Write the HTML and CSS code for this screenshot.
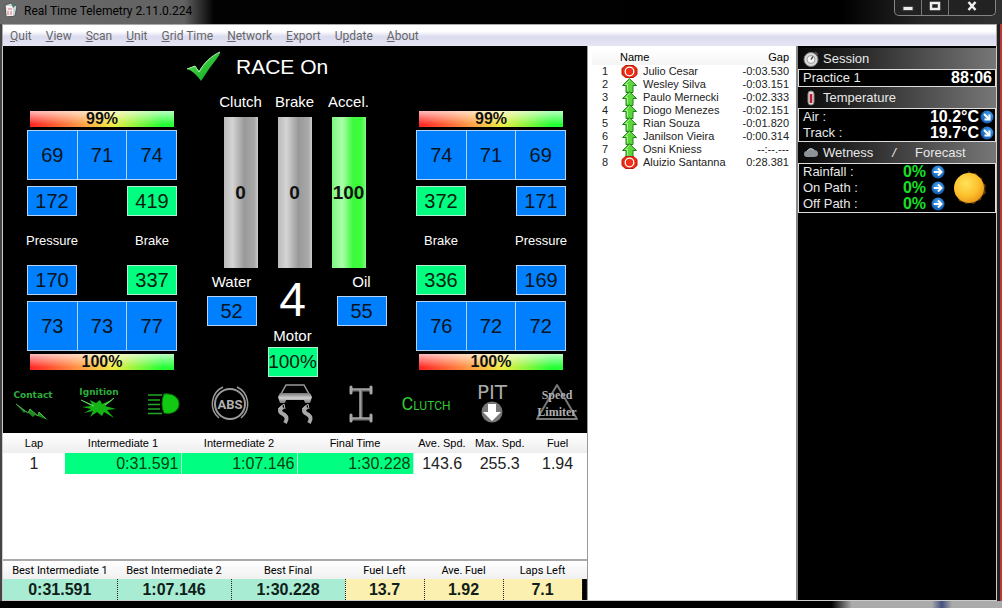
FILE: index.html
```html
<!DOCTYPE html>
<html lang="en">
<head>
<meta charset="utf-8">
<title>Real Time Telemetry 2.11.0.224</title>
<link rel="stylesheet" href="styles.css">
</head>
<body>
<svg class="defs" width="0" height="0" aria-hidden="true">
  <defs>
    <linearGradient id="steel" x1="0" y1="0" x2="0" y2="1"><stop offset="0" stop-color="#777"/><stop offset=".5" stop-color="#d0d0d0"/><stop offset="1" stop-color="#777"/></linearGradient>
    <linearGradient id="chk" x1="0" y1="0" x2="1" y2="1"><stop offset="0" stop-color="#5be860"/><stop offset="1" stop-color="#05a010"/></linearGradient>
    <radialGradient id="sun" cx=".4" cy=".35" r=".7"><stop offset="0" stop-color="#ffe25a"/><stop offset=".6" stop-color="#fcc02c"/><stop offset="1" stop-color="#e89418"/></radialGradient>
    <radialGradient id="ball" cx=".5" cy=".35" r=".7"><stop offset="0" stop-color="#4aa8f0"/><stop offset="1" stop-color="#0a4fa8"/></radialGradient>
    <symbol id="up" viewBox="0 0 16 15"><path d="M8 .7 15 7.500h-3.500V14.500h-7V7.500H1z" fill="#5cd63c" stroke="#20801a"/><path d="M8 2.500 4 6.500h2v6" fill="none" stroke="#a4f488"/></symbol>
    <symbol id="stop" viewBox="0 0 16 13"><path d="M4 .5h8l3.500 3v6l-3.500 3H4L.5 9.500v-6z" fill="#e82c14" stroke="#b81808"/><circle cx="8" cy="6.500" r="4.300" fill="#f23018" stroke="#fff" stroke-width="1.300"/></symbol>
    <symbol id="arrow" viewBox="0 0 14 14"><circle cx="7" cy="7" r="6.500" fill="url(#ball)"/><path d="M2.800 7h7M7 3.500 10.500 7 7 10.500" fill="none" stroke="#fff" stroke-width="2"/></symbol>
  </defs>
</svg>

<header class="titlebar">
  <svg class="appicon" viewBox="0 0 14 16"><path d="M1 3 7 1l6 3-2 10-9 1z" fill="#c8d8d4" stroke="#555"/><path d="M2 4h7v10H3z" fill="#f4f0f0"/><path d="M4 7h4M4 9v4M7 9v4" stroke="#d07080"/><path d="m7 1 5 2-3 3z" fill="#50786c"/></svg>
  <h1 class="title">Real Time Telemetry 2.11.0.224</h1>
  <div class="winbtns">
    <button aria-label="Minimize"><svg width="12" height="12"><path d="M1 6.500h10v4H1z" fill="#eee" stroke="#444"/></svg></button>
    <button aria-label="Maximize"><svg width="12" height="12"><path d="M2 3h8v6H2z" fill="none" stroke="#eee" stroke-width="2.500"/></svg></button>
    <button class="close" aria-label="Close"><svg width="12" height="12"><path d="m2.500 2 7 8m0-8-7 8" stroke="#eee" stroke-width="2.500"/></svg></button>
  </div>
</header>

<div class="frame">
<nav class="menu">
  <button><u>Q</u>uit</button><button><u>V</u>iew</button><button><u>S</u>can</button><button><u>U</u>nit</button><button><u>G</u>rid Time</button><button><u>N</u>etwork</button><button><u>E</u>xport</button><button>U<u>p</u>date</button><button><u>A</u>bout</button>
</nav>
<main class="panes">
<section class="left">
  <div class="dash">
    <div class="race">
      <svg width="36" height="32" viewBox="0 0 36 32"><path d="M1 18 9 15 13 20C18 12 25 5 34 1 34 5 27 12 23 18L15 30Q8 20 1 18z" fill="url(#chk)"/><path d="M1 18 9 15 13 21C18 12 25 5 34 1" fill="none" stroke="#b8f4b8"/></svg>
      <span>RACE On</span>
    </div>
    <div class="car">
      <div class="wheels">
        <div class="wear">99%</div>
        <div class="tyre"><span>69</span><span>71</span><span>74</span></div>
        <div class="pair"><span class="box">172</span><span class="box ok">419</span></div>
        <div class="names"><span>Pressure</span><span>Brake</span></div>
        <div class="pair"><span class="box">170</span><span class="box ok">337</span></div>
        <div class="tyre"><span>73</span><span>73</span><span>77</span></div>
        <div class="wear">100%</div>
      </div>
      <div class="engine">
        <div class="pedals">
          <div class="pedal"><span>Clutch</span><b class="bar">0</b></div>
          <div class="pedal"><span>Brake</span><b class="bar">0</b></div>
          <div class="pedal"><span>Accel.</span><b class="bar full">100</b></div>
        </div>
        <div class="fluids">
          <div class="gauge"><span>Water</span><span class="box">52</span></div>
          <div class="motor"><span class="gear">4</span><span class="mlabel">Motor</span><span class="box ok">100%</span></div>
          <div class="gauge"><span>Oil</span><span class="box">55</span></div>
        </div>
      </div>
      <div class="wheels">
        <div class="wear">99%</div>
        <div class="tyre"><span>74</span><span>71</span><span>69</span></div>
        <div class="pair"><span class="box ok">372</span><span class="box">171</span></div>
        <div class="names"><span>Brake</span><span>Pressure</span></div>
        <div class="pair"><span class="box ok">336</span><span class="box">169</span></div>
        <div class="tyre"><span>76</span><span>72</span><span>72</span></div>
        <div class="wear">100%</div>
      </div>
    </div>
    <div class="lamps">
      <svg viewBox="0 0 44 44"><text class="lamp-dv" x="22" y="16">Contact</text><path d="m5 22 12 9 2-4 8 7 1-4 9 8-13-5-2 2-7-6-2 2z" fill="#1c8a1c"/><path d="m5 22 12 9 2-4 8 7 1-4 7 7" fill="none" stroke="#4cb84c"/></svg>
      <svg viewBox="0 0 44 44"><text class="lamp-dv" x="22" y="13">Ignition</text><path d="m4 18 11 5-2-5 6 3 4-3 2 4 12-5-9 7 11 3-9 1 7 8-10-6-2 4-5-4-7 5 3-6-9 2 7-4-9-2 9-1z" fill="#14b414"/><path d="m4 18 13 6m20-8-9 7" stroke="#7ad87a"/></svg>
      <svg viewBox="0 0 44 44"><path d="M6 13h14M6 18h12M6 22.500h12M6 27h12M6 31.500h14" stroke="#22a822" stroke-width="1.500"/><path d="M22 12c9-1 15 4 15 10s-6 11-15 9q-4-9 0-19z" fill="#12c812" stroke="#067806"/></svg>
      <svg viewBox="0 0 44 44"><circle cx="22" cy="22" r="15" fill="none" stroke="#9a9a9a" stroke-width="2"/><path d="M15 5a18.500 18.500 0 0 0-4 31M29 5a18.500 18.500 0 0 1 4 31" fill="none" stroke="#9a9a9a" stroke-width="1.500"/><text class="lamp-abs" x="22" y="27">ABS</text></svg>
      <svg viewBox="0 0 44 44"><path d="M13 3h18l5 9H8z" fill="#050505" stroke="#999" stroke-width="1.500"/><path d="M7 11h30l2 4-2 6h-5l-1-3H13l-1 3H7l-2-6z" fill="url(#steel)"/><path d="M10 25q-6 4 0 7t2 9M34 25q-6 4 0 7t2 9" fill="none" stroke="#a8a8a8" stroke-width="4"/><path d="m5 27 6-5 1 5m17 0 6-5 1 5" stroke="#bbb" fill="none"/></svg>
      <svg viewBox="0 0 44 44"><path d="M12 8h20M22 8v28M12 37h20" stroke="#777" stroke-width="3"/><path d="M12 7h20M21 8v28M12 36h20" stroke="#c4c4c4"/><path d="M12 5v6M32 5v6M12 33v6M32 33v6" stroke="#a8a8a8" stroke-width="3" stroke-linecap="round"/></svg>
      <svg viewBox="0 0 44 44"><text class="lamp-clutch" x="22" y="28"><tspan class="big">C</tspan>LUTCH</text></svg>
      <svg viewBox="0 0 44 44"><text class="lamp-pit" x="22" y="17">PIT</text><circle cx="22" cy="30" r="10.500" fill="#777"/><path d="M18 22h8v8h5l-9 9-9-9h5z" fill="#fff"/></svg>
      <svg viewBox="0 0 44 44"><path d="m22 3 20 34H2z" fill="none" stroke="#777" stroke-width="2" stroke-linejoin="round"/><text class="lamp-lim" x="22" y="17">Speed</text><text class="lamp-lim" x="22" y="34">Limiter</text></svg>
    </div>
  </div>

  <div class="laps">
    <table>
      <colgroup><col class="c-lap"><col class="c-time"><col class="c-time"><col class="c-time"><col class="c-spd"><col class="c-spd"><col class="c-spd"></colgroup>
      <thead><tr><th>Lap</th><th>Intermediate 1</th><th>Intermediate 2</th><th>Final Time</th><th>Ave. Spd.</th><th>Max. Spd.</th><th>Fuel</th></tr></thead>
      <tbody><tr><td>1</td><td class="good">0:31.591</td><td class="good">1:07.146</td><td class="good">1:30.228</td><td>143.6</td><td>255.3</td><td>1.94</td></tr></tbody>
    </table>
  </div>
  <div class="best">
    <table>
      <colgroup><col class="b-time"><col class="b-time"><col class="b-time"><col class="b-fuel"><col class="b-fuel"><col class="b-fuel"><col></colgroup>
      <thead><tr><th>Best Intermediate 1</th><th>Best Intermediate 2</th><th>Best Final</th><th>Fuel Left</th><th>Ave. Fuel</th><th>Laps Left</th><th></th></tr></thead>
      <tbody><tr><td>0:31.591</td><td>1:07.146</td><td>1:30.228</td><td class="fuel">13.7</td><td class="fuel">1.92</td><td class="fuel">7.1</td><td class="end"></td></tr></tbody>
    </table>
  </div>
</section>

<section class="drivers">
  <table>
    <colgroup><col class="d-pos"><col class="d-ico"><col><col class="d-gap"></colgroup>
    <thead><tr><th></th><th colspan="2">Name</th><th class="gap">Gap</th></tr></thead>
    <tbody>
      <tr><td>1</td><td><svg class="stop"><use href="#stop"/></svg></td><td>Julio Cesar</td><td>-0:03.530</td></tr>
      <tr><td>2</td><td><svg class="up"><use href="#up"/></svg></td><td>Wesley Silva</td><td>-0:03.151</td></tr>
      <tr><td>3</td><td><svg class="up"><use href="#up"/></svg></td><td>Paulo Mernecki</td><td>-0:02.333</td></tr>
      <tr><td>4</td><td><svg class="up"><use href="#up"/></svg></td><td>Diogo Menezes</td><td>-0:02.151</td></tr>
      <tr><td>5</td><td><svg class="up"><use href="#up"/></svg></td><td>Rian Souza</td><td>-0:01.820</td></tr>
      <tr><td>6</td><td><svg class="up"><use href="#up"/></svg></td><td>Janilson Vieira</td><td>-0:00.314</td></tr>
      <tr><td>7</td><td><svg class="up"><use href="#up"/></svg></td><td>Osni Kniess</td><td>--:--.---</td></tr>
      <tr><td>8</td><td><svg class="stop"><use href="#stop"/></svg></td><td>Aluizio Santanna</td><td>0:28.381</td></tr>
    </tbody>
  </table>
</section>

<aside class="session">
  <h2><svg viewBox="0 0 16 16"><circle cx="8" cy="8.500" r="7" fill="#d8d8d8" stroke="#777"/><circle cx="8" cy="8.500" r="4" fill="#f4f4f4" stroke="#999"/><path d="m8 8.500 2-3M12 1l3 3" stroke="#555" stroke-width="1.500"/></svg>Session</h2>
  <div class="panel"><div class="line first"><span>Practice 1</span><b>88:06</b></div></div>
  <h2><svg viewBox="0 0 16 16"><rect x="5" y="1" width="6" height="14" rx="3" fill="#e4d8d8" stroke="#888"/><path d="M8 4v9" stroke="#c01830" stroke-width="2.500"/></svg>Temperature</h2>
  <div class="panel">
    <div class="line"><span>Air :</span><b>10.2°C</b><svg class="down"><use href="#arrow"/></svg></div>
    <div class="line"><span>Track :</span><b>19.7°C</b><svg class="down"><use href="#arrow"/></svg></div>
  </div>
  <h2><svg viewBox="0 0 16 16"><path d="M1 9q0-3 3-3 3-5 7-1 4 0 4 4 0 3-4 3H4Q1 12 1 9z" fill="#8c9499"/><path d="M4 6q3-4 7-1" stroke="#c4cacc" fill="none"/></svg>Wetness <i>/</i> <span class="fore">Forecast</span></h2>
  <div class="panel wet">
    <div class="wlines">
      <div class="line"><span>Rainfall :</span><b class="dry">0%</b><svg><use href="#arrow"/></svg></div>
      <div class="line"><span>On Path :</span><b class="dry">0%</b><svg><use href="#arrow"/></svg></div>
      <div class="line"><span>Off Path :</span><b class="dry">0%</b><svg><use href="#arrow"/></svg></div>
    </div>
    <svg class="sun" viewBox="0 0 34 34"><path d="m17 0 3 3 4-1 2 4 4 1v4l4 3-1 4 1 4-4 3-1 4-4 1-3 3-4-1-4 1-3-2-4-1-1-4-3-3v-4l-1-4 3-3 1-4 4-1 3-3z" fill="#5c3c0c"/><circle cx="17" cy="17" r="15" fill="url(#sun)"/></svg>
  </div>
</aside>
</main>
</div>
</body>
</html>
```
FILE: styles.css
```css
* { box-sizing: border-box; }
body {
  margin: 0;
  min-height: 100vh;
  display: flex;
  flex-direction: column;
  background: linear-gradient(90deg, #000 0 83%, #aaa 85% 93%, #445080 94%, #aaa 95%);
  font: 11px/13px "Liberation Sans", Arial, sans-serif;
  color: #000;
}
.defs { position: absolute; }
button { border: 0; background: none; padding: 0; font: inherit; color: inherit; }
table { border-collapse: collapse; table-layout: fixed; width: 100%; }
th { font-weight: normal; padding: 0; }
td { padding: 0; }

.titlebar {
  height: 24px;
  display: flex;
  align-items: flex-start;
  padding: 0 6px 0 4px;
  background: linear-gradient(90deg, #6a6a6a 0, #626262 184px, #020202 214px, #000 84%, #262626 92%, #303030);
}
.appicon { width: 14px; height: 16px; margin: 2px 6px 0 0; }
.title { margin: 2px auto 0 0; font: 12px/18px Roboto, sans-serif; }
.winbtns { display: flex; height: 16px; border: 1px solid #858585; border-top: 0; border-radius: 0 0 5px 5px; background: #222; }
.winbtns button { width: 27px; display: flex; justify-content: center; border-right: 1px solid #777; }
.winbtns .close { width: 46px; border: 0; }

.frame {
  flex: 1;
  display: flex;
  flex-direction: column;
  margin: 0 0 7px;
  padding: 0 2px 0 2px;
  background: linear-gradient(90deg, #444 0 50%, #222 50% calc(100% - 2px), #b83838 calc(100% - 2px));
}
.menu {
  height: 22px;
  display: flex;
  align-items: center;
  gap: 14px;
  padding-left: 7px;
  margin-right: 3px;
  border: 1px solid #aaa;
  border-width: 1px 1px 0;
  background: linear-gradient(#fff 0 30%, #dcdcf0 55%, #e4e4f4);
  font: 12px/16px Roboto, sans-serif;
  color: #666;
}
.panes {
  flex: 1;
  display: grid;
  grid-template-columns: 585fr 210fr 198fr;
  margin-right: 3px;
  border: solid #ccc;
  border-width: 0 1px 1px;
}
.left { display: flex; flex-direction: column; border-right: 1px solid #999; background: #fff; }

.dash { background: #000; color: #fff; height: 387px; }
.race { display: flex; align-items: center; gap: 14px; height: 48px; padding: 0 0 6px 183px; font-size: 21px; line-height: 24px; }
.car { display: flex; justify-content: space-between; padding: 0 21px 0 24px; }
.wheels { width: 150px; padding-top: 17px; }
.wear {
  margin: 0 3px;
  height: 16px;
  font: bold 16px/16px "Liberation Sans", Arial, sans-serif;
  text-align: center;
  color: #111;
  background: linear-gradient(#ffffffb0, #fff0 85%), linear-gradient(90deg, #f22 0, #f94 35%, #ee4 58%, #2f3 92%);
}
.tyre { display: grid; grid-template-columns: repeat(3, 1fr); height: 50px; margin: 3px 0; border: solid #b8d4f4; border-width: 1px 1px 1px 0; }
.tyre span { display: grid; place-items: center; background: #0080ff; border-left: 1px solid #b8d4f4; font-size: 20px; color: #0a1420; }
.pair { display: flex; justify-content: space-between; padding: 3px 0; }
.box { display: flex; align-items: center; justify-content: center; width: 50px; height: 30px; background: #0080ff; border: 1px solid #b8d4f4; font-size: 20px; line-height: 24px; color: #0a1420; }
.ok { background: #00ff80; border-color: #b0f0d0; color: #0a2010; }
.names { display: flex; justify-content: space-between; height: 43px; align-items: center; font-size: 13px; }
.names span { width: 50px; display: flex; justify-content: center; }

.engine { width: 180px; font-size: 15px; line-height: 16px; }
.pedals { display: grid; grid-template-columns: repeat(3, 50px); gap: 4px; padding-left: 9px; }
.pedal { display: flex; flex-direction: column; align-items: center; gap: 7px; }
.bar { width: 34px; height: 151px; display: grid; place-items: center; font-size: 19px; color: #111; background: linear-gradient(90deg, #bbb, #d4d4d4 25%, #999 60%, #aaa 90%, #ccc); }
.full { background: linear-gradient(90deg, #7cf87c, #acffac 30%, #3cf83c 62%, #3cff3c 85%, #80f880); }
.fluids { display: grid; grid-template-columns: 50px 1fr 50px; padding-top: 4px; }
.gauge { display: flex; flex-direction: column; align-items: center; gap: 6px; padding-top: 2px; }
.motor { display: flex; flex-direction: column; align-items: center; padding-right: 8px; }
.gear { font-size: 48px; line-height: 56px; }
.mlabel { margin-bottom: 3px; }
.motor .box { font-size: 19px; }
.lamps { display: flex; justify-content: space-between; padding: 5px 8px 0 8px; }
.lamps svg { width: 44px; height: 44px; overflow: visible; }
.lamps text { text-anchor: middle; }
.lamp-dv { font: bold 9px "DejaVu Sans", sans-serif; fill: #2cae3c; }
.lamp-abs { font: bold 13px Roboto, sans-serif; fill: #b0b0b0; }
.lamp-clutch { font: 12px Roboto, sans-serif; fill: #32c832; }
.lamp-clutch .big { font-size: 18px; }
.lamp-pit { font: 20px "DejaVu Sans", sans-serif; fill: #aaa; }
.lamp-lim { font: bold 12px "Liberation Serif", serif; fill: #b0b0b0; }

.laps { flex: 1; border-bottom: 2px solid #aaa; }
.laps thead tr { height: 20px; background: linear-gradient(#fff, #eee); }
.laps td { height: 21px; font-size: 16px; text-align: center; color: #222; }
.laps .good { background: #00ff80; text-align: right; padding-right: 2px; border-right: 1px solid #b8f8d8; color: #084010; }
.c-lap { width: 62px; }
.c-time { width: 116px; }
.best thead tr { height: 18px; background: linear-gradient(#fff, #f0f0f0); }
.best th { font: 11px/13px Roboto, sans-serif; white-space: nowrap; }
.best td { height: 21px; text-align: center; font-size: 16px; font-weight: bold; color: #102018; background: #a8ecd4; border-right: 1px dotted #222; }
.best .fuel { background: #fcf0b0; }
.best .end { background: #000; }
.b-time { width: 114px; }
.b-fuel { width: 79px; }

.drivers { background: #fff; padding: 4px 7px 0 4px; border-right: 2px solid #888; }
.drivers thead tr { height: 15px; background: linear-gradient(#fff, #f4f4f4); }
.drivers th { text-align: left; padding-left: 2px; }
.drivers th.gap { text-align: right; }
.drivers td { height: 13px; line-height: 13px; color: #222; white-space: nowrap; }
.drivers td:first-child { text-align: center; }
.drivers td:last-child { text-align: right; }
.drivers svg { display: block; width: 17px; height: 13px; margin-left: 3px; }
.drivers svg.up { height: 15px; margin-bottom: -2px; }
.d-pos { width: 26px; }
.d-ico { width: 25px; }
.d-gap { width: 60px; }

.session { background: #000; color: #e8e8e8; font-size: 13px; line-height: 16px; padding-top: 2px; }
.session h2 { display: flex; align-items: center; margin: 0; height: 21px; padding-left: 5px; font: 13px/16px "Liberation Sans", Arial, sans-serif; background: linear-gradient(90deg, #080808, #222 25%, #777); }
.session h2 svg { width: 16px; height: 16px; margin-right: 4px; }
.session h2 i { margin: 0 19px; }
.panel { border: 1px solid #ddd; padding: 0 1px 0 4px; }
.line { display: flex; align-items: center; height: 16px; }
.line b { margin-left: auto; font-size: 16px; color: #fff; }
.line svg { width: 14px; height: 14px; margin-left: 1px; }
.line.first b { margin-right: 2px; }
.down { transform: rotate(45deg); }
.line .dry { color: #18e028; }
.wet { display: flex; align-items: center; justify-content: space-between; }
.wlines { width: 142px; }
.wet .line svg { margin-left: 5px; }
.sun { width: 34px; height: 34px; margin-right: 8px; }
```
